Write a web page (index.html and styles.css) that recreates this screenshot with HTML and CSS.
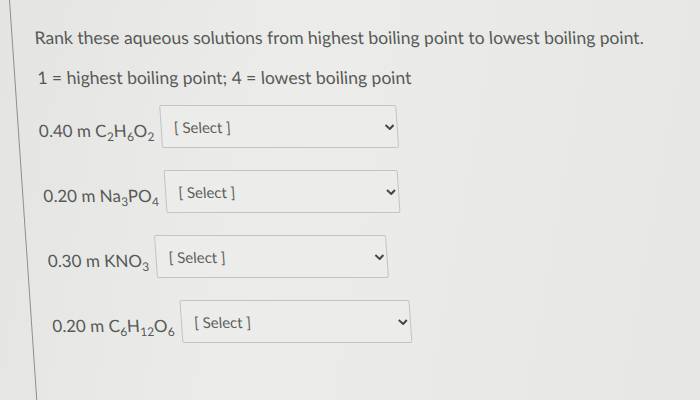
FILE: index.html
```html
<!DOCTYPE html>
<html>
<head>
<meta charset="utf-8">
<link rel="stylesheet" href="styles.css">
</head>
<body>
<div class="page">
  <div class="sheet">
    <p class="q">Rank these aqueous solutions from highest boiling point to lowest boiling point.</p>
    <p class="q">1 = highest boiling point; 4 = lowest boiling point</p>
    <div class="rows">
      <div class="row">
        <span class="label">0.40 m C<sub>2</sub>H<sub>6</sub>O<sub>2</sub></span>
        <div class="select"><span class="ph">[ Select ]</span><svg class="chev" viewBox="0 0 10 6"><path d="M1 1 L5 5 L9 1"/></svg></div>
      </div>
      <div class="row">
        <span class="label">0.20 m Na<sub>3</sub>PO<sub>4</sub></span>
        <div class="select"><span class="ph">[ Select ]</span><svg class="chev" viewBox="0 0 10 6"><path d="M1 1 L5 5 L9 1"/></svg></div>
      </div>
      <div class="row">
        <span class="label">0.30 m KNO<sub>3</sub></span>
        <div class="select"><span class="ph">[ Select ]</span><svg class="chev" viewBox="0 0 10 6"><path d="M1 1 L5 5 L9 1"/></svg></div>
      </div>
      <div class="row">
        <span class="label">0.20 m C<sub>6</sub>H<sub>12</sub>O<sub>6</sub></span>
        <div class="select"><span class="ph">[ Select ]</span><svg class="chev" viewBox="0 0 10 6"><path d="M1 1 L5 5 L9 1"/></svg></div>
      </div>
    </div>
  </div>
</div>
</body>
</html>
```
FILE: styles.css
```css
html, body {
  margin: 0;
  padding: 0;
  width: 700px;
  height: 400px;
  overflow: hidden;
  background: #e7e8e5;
}
.page {
  width: 700px;
  height: 400px;
  overflow: hidden;
  background: linear-gradient(100deg, #e4e5e2 0%, #ecedea 40%, #e6e7e4 100%);
  font-family: Lato, "Open Sans", sans-serif;
  color: #575957;
}
.sheet {
  margin-left: 9px;
  height: 420px;
  border-left: 1px solid #8e8f8c;
  padding: 26px 0 0 20px;
  transform: skewX(3.9deg);
  transform-origin: 0 0;
}
.q {
  margin: 0 0 16px 0;
  padding-left: 2px;
  font-size: 17.5px;
  line-height: 24px;
}
.rows {
  margin-top: -1px;
  display: flex;
  flex-direction: column;
  gap: 22px;
}
.row {
  display: flex;
  align-items: flex-start;
  gap: 7px;
}
.label {
  font-size: 17px;
  line-height: 24px;
  padding-top: 14px;
  white-space: nowrap;
}
.label sub {
  font-size: 12px;
  line-height: 0;
  vertical-align: -4px;
}
.select {
  width: 235px;
  height: 41px;
  border: 1px solid #c3c4c1;
  border-radius: 2px;
  background: #ecedea;
  display: flex;
  align-items: flex-start;
  justify-content: space-between;
  box-sizing: content-box;
}
.row:nth-child(2) .select { width: 232px; }
.row:nth-child(3) .select { width: 230px; }
.row:nth-child(4) .select { width: 228px; }
.ph {
  font-size: 15px;
  line-height: 20px;
  padding: 11px 0 0 12px;
  color: #5d5f5c;
}
.chev {
  width: 10px;
  height: 6px;
  margin: 18px 2px 0 0;
  fill: none;
  stroke: #454745;
  stroke-width: 2;
}
```
